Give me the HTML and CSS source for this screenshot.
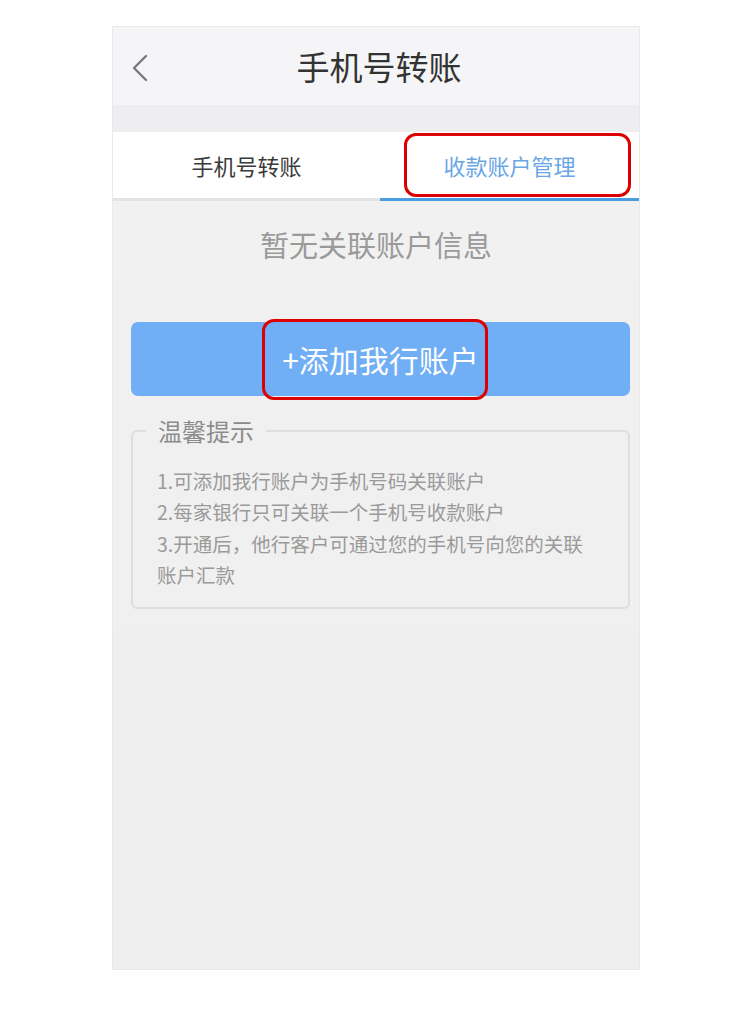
FILE: index.html
```html
<!DOCTYPE html>
<html lang="zh-CN">
<head>
<meta charset="utf-8">
<title>手机号转账</title>
<link rel="stylesheet" href="styles.css">
</head>
<body>
<div class="phone">
  <header class="nav">
    <svg class="back" width="22" height="30" viewBox="0 0 22 30"><path d="M17 3 L5 15 L17 27" fill="none" stroke="#7a7a7a" stroke-width="2.4" stroke-linecap="round" stroke-linejoin="round"/></svg>
    <h1 class="title">手机号转账</h1>
  </header>
  <div class="band"></div>
  <nav class="tabs">
    <div class="tab">手机号转账</div>
    <div class="tab active">收款账户管理<span class="mark mark-tab"></span></div>
  </nav>
  <div class="empty">暂无关联账户信息</div>
  <main class="content">
    <div class="btn-wrap">
      <button class="add-btn">+添加我行账户</button>
      <span class="mark mark-btn"></span>
    </div>
    <fieldset class="tips">
      <legend>温馨提示</legend>
      <p>1.可添加我行账户为手机号码关联账户</p>
      <p>2.每家银行只可关联一个手机号收款账户</p>
      <p>3.开通后，他行客户可通过您的手机号向您的关联账户汇款</p>
    </fieldset>
  </main>
</div>
</body>
</html>
```
FILE: styles.css
```css
* { box-sizing: border-box; }
html, body { margin: 0; padding: 0; background: #ffffff; }
body {
  font-family: "Noto Sans CJK SC", "Noto Sans", "Liberation Sans", sans-serif;
  padding: 26px 0 0 112px;
}
.phone {
  width: 528px;
  height: 944px;
  background: #efefef;
  border: 1px solid #e9e9e9;
  display: flex;
  flex-direction: column;
}
.nav {
  height: 78px;
  background: #f5f5f7;
  display: flex;
  align-items: center;
  justify-content: center;
  padding-left: 6px;
  position: relative;
}
.back {
  position: absolute;
  left: 16px;
  top: 26px;
}
.title {
  margin: 0;
  font-size: 33px;
  font-weight: 400;
  color: #333333;
  letter-spacing: 0;
}
.band {
  height: 27px;
  background: #eeeef0;
}
.tabs {
  display: flex;
  height: 69px;
  background: #ffffff;
}
.tab {
  flex: 0 0 267px;
  display: flex;
  align-items: center;
  justify-content: center;
  font-size: 22px;
  color: #3a3a3a;
  border-bottom: 3px solid #e3e3e3;
  position: relative;
}
.tab.active {
  flex: 1;
  color: #6aa6e6;
  border-bottom-color: #4a9de0;
}
.mark {
  position: absolute;
  border: 3px solid #dc0000;
  border-radius: 12px;
  pointer-events: none;
}
.mark-tab {
  left: 24px;
  top: 1px;
  width: 227px;
  height: 64px;
}
.empty {
  height: 85px;
  display: flex;
  align-items: center;
  justify-content: center;
  font-size: 29px;
  color: #9a9a9a;
  background: #f1f1f1;
}
.content {
  padding: 36px 10px 0 18px;
  background: #f0f0f0;
  height: 340px;
}
.btn-wrap {
  position: relative;
}
.add-btn {
  display: block;
  width: 499px;
  height: 74px;
  border: none;
  border-radius: 7px;
  background: #70aef5;
  color: #ffffff;
  font-family: inherit;
  font-size: 30px;
  font-weight: 400;
  padding: 0;
}
.mark-btn {
  left: 131px;
  top: -3px;
  width: 226px;
  height: 81px;
}
.tips {
  margin: 20px 0 0 0;
  width: 499px;
  height: 193px;
  border: 2px solid #dedede;
  border-radius: 6px;
  padding: 19px 32px 0 24px;
}
.tips legend {
  font-size: 24px;
  color: #8c8c8c;
  padding: 0 12px;
  margin-left: -11px;
  line-height: 30px;
}
.tips p {
  margin: 0;
  font-size: 19.5px;
  line-height: 31.3px;
  color: #9a9a9a;
}
```
